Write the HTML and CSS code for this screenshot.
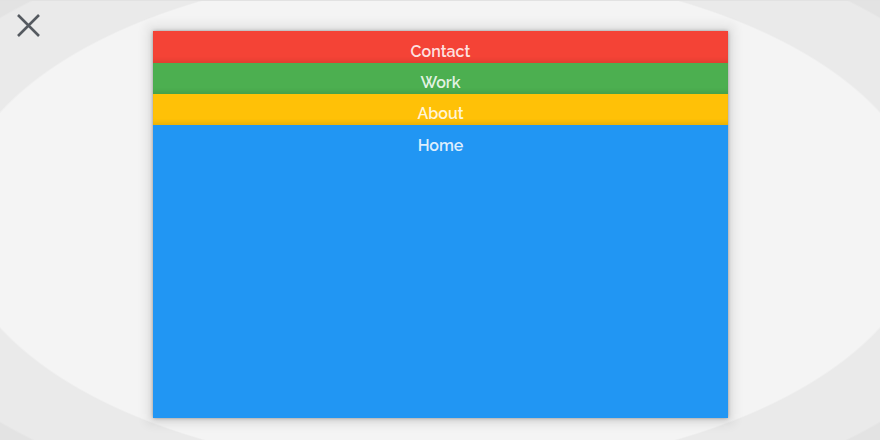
FILE: index.html
```html
<!DOCTYPE html>
<html lang="en">
<head>
    <meta charset="UTF-8">
    <meta name="viewport" content="width=device-width, initial-scale=1.0">
    <title>Menu</title>
    <link rel="stylesheet" href="styles.css">
</head>
<body>

<!-- Chiudi -->
<button class="close-button" aria-label="Close">
    <svg width="26" height="26" viewBox="0 0 26 26">
        <path d="M2 2 L23 23 M23 2 L2 23" stroke="#555a60" stroke-width="2.6" stroke-linecap="butt" fill="none"/>
    </svg>
</button>

<div class="stage">
    <nav class="menu-card">
        <a class="menu-item contact" href="#">Contact</a>
        <a class="menu-item work" href="#">Work</a>
        <a class="menu-item about" href="#">About</a>
        <a class="menu-item home" href="#">Home</a>
    </nav>
</div>

</body>
</html>
```

FILE: styles.css
```css
html, body {
    height: 100%;
}

body {
    margin: 0;
    padding: 0;
    font-family: Raleway, "Open Sans", Arial, sans-serif;
    border-top: 1px solid #e2e2e2;
    box-sizing: border-box;
    background-color: #e3e3e3;
    background-image:
        radial-gradient(ellipse 488px 252px at 50% 50%, #f4f4f4 99.5%, rgba(234, 234, 234, 0) 100%),
        radial-gradient(ellipse 590px 305px at 50% 50%, #eaeaea 99.5%, rgba(227, 227, 227, 0) 100%);
    overflow: hidden;
}

.close-button {
    position: absolute;
    top: 13px;
    left: 16px;
    background: none;
    border: none;
    padding: 0;
    cursor: pointer;
}

.stage {
    display: flex;
    justify-content: center;
    padding-top: 30px;
}

.menu-card {
    width: 575px;
    height: 387px;
    margin-left: 1px;
    display: flex;
    flex-direction: column;
    box-shadow: 0 0 3px rgba(0, 0, 0, 0.3), 0 1px 7px 1px rgba(0, 0, 0, 0.14), 0 0 8px 9px rgba(0, 0, 0, 0.045);
    border-radius: 2px;
}

.menu-item {
    display: block;
    flex: none;
    height: 31px;
    box-sizing: border-box;
    padding-top: 8px;
    line-height: 24px;
    text-align: center;
    font-size: 16px;
    font-weight: 650;
    color: rgba(255, 255, 255, 0.85);
    text-decoration: none;
    box-shadow: inset 0 -5px 5px -3px rgba(0, 0, 0, 0.1);
}

.contact {
    height: 32px;
    padding-top: 9px;
    background-color: #f44336;
}

.work {
    background-color: #4caf50;
}

.about {
    background-color: #ffc107;
}

.home {
    flex: 1;
    padding-top: 9px;
    background-color: #2196f3;
    box-shadow: none;
}
```
